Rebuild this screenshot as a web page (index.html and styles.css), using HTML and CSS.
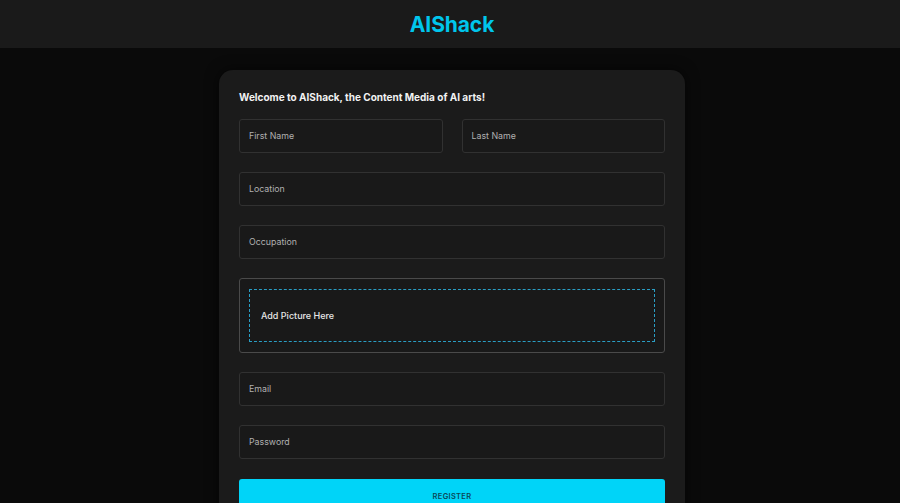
FILE: index.html
```html
<!DOCTYPE html>
<html lang="en">
<head>
<meta charset="utf-8">
<title>AIShack</title>
<link rel="stylesheet" href="styles.css">
</head>
<body>
<header class="topbar">
  <h1 class="brand">AIShack</h1>
</header>
<main class="page">
  <section class="card">
    <h2 class="welcome">Welcome to AIShack, the Content Media of AI arts!</h2>
    <form class="form">
      <div class="row">
        <div class="field">First Name</div>
        <div class="field">Last Name</div>
      </div>
      <div class="field">Location</div>
      <div class="field">Occupation</div>
      <div class="picture">
        <div class="dropzone">Add Picture Here</div>
      </div>
      <div class="field">Email</div>
      <div class="field">Password</div>
      <button type="button" class="register">REGISTER</button>
    </form>
  </section>
</main>
</body>
</html>
```
FILE: styles.css
```css
html, body {
  margin: 0;
  padding: 0;
  background: #0a0a0a;
  font-family: "Inter", "Noto Sans", sans-serif;
  height: 100%;
  overflow: hidden;
}
.topbar {
  height: 48px;
  padding-left: 4px;
  background: #1a1a1a;
  display: flex;
  align-items: center;
  justify-content: center;
}
.brand {
  margin: 0;
  font-size: 21px;
  font-weight: 700;
  color: #00c6ec;
  letter-spacing: -0.1px;
}
.page {
  display: flex;
  justify-content: center;
  padding-top: 22px;
  padding-left: 4px;
}
.card {
  width: 426px;
  padding: 20px 20px 20px;
  background: #1b1b1b;
  border-radius: 14px;
  box-shadow: 0 0 14px rgba(0,0,0,0.6);
}
.welcome {
  margin: 0 0 14px;
  font-size: 10px;
  line-height: 15px;
  font-weight: 700;
  color: #f2f2f2;
}
.form {
  display: flex;
  flex-direction: column;
  gap: 19px;
}
.row {
  display: grid;
  grid-template-columns: 1fr 1fr;
  gap: 19px;
}
.field {
  height: 32px;
  border: 1px solid #313131;
  border-radius: 3px;
  background: #191919;
  color: #b0b0b0;
  font-size: 8.8px;
  display: flex;
  align-items: center;
  padding-left: 9px;
  padding-bottom: 1px;
  box-sizing: content-box;
}
.field { height: 31px; }
.picture {
  border: 1px solid #4a4a4a;
  border-radius: 3px;
  padding: 10px 9px;
  background: #191919;
}
.dropzone {
  height: 51px;
  border: 1px dashed #2a9ec4;
  display: flex;
  align-items: center;
  padding-left: 11px;
  color: #e6e6e6;
  font-size: 9px;
  font-weight: 500;
}
.register {
  margin-top: 1px;
  height: 34px;
  border: none;
  border-radius: 3px;
  background: #00d4f8;
  color: #0b4a5a;
  font-family: inherit;
  font-size: 7.5px;
  font-weight: 600;
  letter-spacing: 0.3px;
}
```
